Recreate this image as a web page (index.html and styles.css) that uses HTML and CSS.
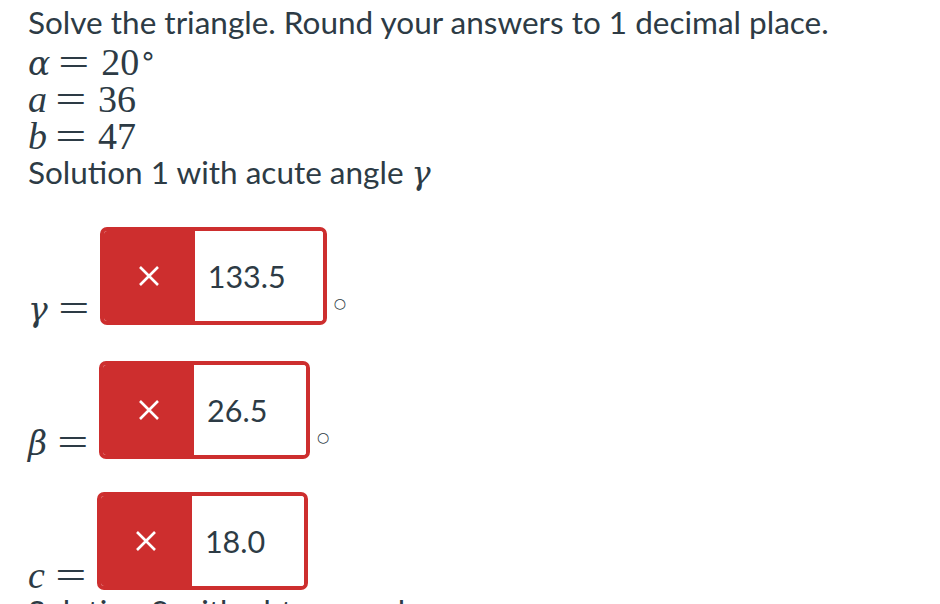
FILE: index.html
```html
<!DOCTYPE html>
<html>
<head>
<meta charset="utf-8">
<link rel="stylesheet" href="styles.css">
</head>
<body>
<div class="question">
  <div class="line">Solve the triangle. Round your answers to 1 decimal place.</div>
  <div class="mline"><span class="greek">α</span><span class="mo"><span>=</span></span><span class="mn">20</span><span class="deg">∘</span></div>
  <div class="mline"><span class="mi">a</span><span class="mo"><span>=</span></span><span class="mn">36</span></div>
  <div class="mline"><span class="mi">b</span><span class="mo"><span>=</span></span><span class="mn">47</span></div>
  <div class="line sol">Solution 1 with acute angle <span class="greek inline">γ</span></div>

  <div class="row row1">
    <div class="label"><span class="greek">γ</span><span class="mo"><span>=</span></span></div>
    <div class="answer">
      <div class="mark"><svg width="22" height="22" viewBox="0 0 22 22"><path d="M2 2 L20 20 M20 2 L2 20" stroke="#fff" stroke-width="2.6" fill="none"/></svg></div>
      <div class="value v1">133.5</div>
    </div>
    <div class="unit">○</div>
  </div>

  <div class="row row2">
    <div class="label"><span class="greek">β</span><span class="mo"><span>=</span></span></div>
    <div class="answer">
      <div class="mark"><svg width="22" height="22" viewBox="0 0 22 22"><path d="M2 2 L20 20 M20 2 L2 20" stroke="#fff" stroke-width="2.6" fill="none"/></svg></div>
      <div class="value v2">26.5</div>
    </div>
    <div class="unit">○</div>
  </div>

  <div class="row row3">
    <div class="label"><span class="mi">c</span><span class="mo"><span>=</span></span></div>
    <div class="answer">
      <div class="mark"><svg width="22" height="22" viewBox="0 0 22 22"><path d="M2 2 L20 20 M20 2 L2 20" stroke="#fff" stroke-width="2.6" fill="none"/></svg></div>
      <div class="value v3">18.0</div>
    </div>
  </div>

  <div class="line next">Solution 2 with obtuse angle <span class="greek inline">γ</span></div>
</div>
</body>
</html>
```
FILE: styles.css
```css
html, body {
  margin: 0;
  padding: 0;
  background: #ffffff;
  overflow: hidden;
}
body {
  width: 940px;
  height: 604px;
  font-family: Lato, "Open Sans", sans-serif;
  color: #2d3b45;
}
.question {
  padding: 4px 0 0 28px;
}
.line {
  font-size: 31.5px;
  line-height: 37px;
  height: 37px;
  white-space: nowrap;
}
.line.sol {
  box-sizing: border-box;
  padding-top: 2px;
}
.mline,
.label {
  display: flex;
  align-items: baseline;
  font-family: "Liberation Serif", serif;
  font-size: 38px;
  line-height: 32px;
  white-space: nowrap;
}
.mline {
  height: 37px;
  box-sizing: border-box;
  padding-top: 5px;
}
.mi {
  font-style: italic;
}
.greek {
  font-family: "DejaVu Serif", serif;
  font-style: italic;
  font-size: 33px;
  line-height: 32px;
}
.greek.inline {
  font-size: 32px;
  line-height: 30px;
}
.mo {
  display: block;
  width: 29px;
  text-align: center;
  margin: 0 13px 0 9px;
}
.mo span {
  display: inline-block;
  transform: scaleX(1.45);
}
.deg {
  align-self: flex-start;
  font-family: "DejaVu Sans", sans-serif;
  font-size: 28px;
  line-height: 20px;
  margin-top: 0;
}
.row {
  display: flex;
  align-items: flex-end;
}
.row1 { margin-top: 38px; }
.row2 { margin-top: 36px; }
.row3 { margin-top: 33px; }
.label {
  margin-right: 12px;
  margin-bottom: -1px;
}
.label .mo {
  margin: 0 0 0 11px;
}
.answer {
  display: flex;
  height: 98px;
  box-sizing: border-box;
  border: 4px solid #cd2e2e;
  border-radius: 7px;
  overflow: hidden;
}
.mark {
  width: 91px;
  margin-left: -4px;
  padding-left: 4px;
  background: #cd2e2e;
  display: flex;
  align-items: center;
  justify-content: center;
}
.value {
  padding-left: 13px;
  display: flex;
  align-items: center;
  font-size: 30.5px;
  background: #fff;
}
.v1 { width: 115px; }
.v2 { width: 99px; }
.v3 { width: 99px; }
.unit {
  font-family: "DejaVu Sans", sans-serif;
  font-size: 14px;
  margin: 0 0 14px 7px;
}
.next {
  margin-top: 3px;
}
```
